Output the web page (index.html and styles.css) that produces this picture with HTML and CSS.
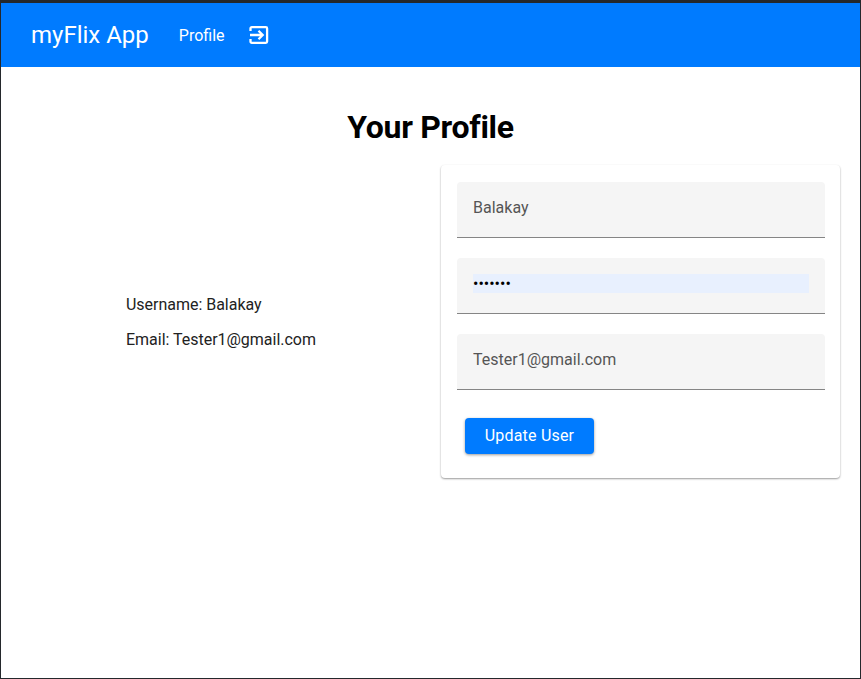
FILE: index.html
```html
<!DOCTYPE html>
<html lang="en">
<head>
    <meta charset="UTF-8">
    <meta name="viewport" content="width=device-width, initial-scale=1.0">
    <title>myFlix App</title>
    <link rel="stylesheet" href="styles.css">
</head>
<body>
    <div class="frame">
        <nav class="navbar">
            <span class="brand">myFlix App</span>
            <a class="nav-link">Profile</a>
            <a class="nav-icon">
                <svg width="20" height="18" viewBox="0 0 20 18" fill="none" stroke="#fff" stroke-width="2.3">
                    <path d="M1.500 5V2.500a1.300 1.300 0 0 1 1.300-1.300h14a1.300 1.300 0 0 1 1.300 1.300v13a1.300 1.300 0 0 1-1.300 1.300h-14a1.300 1.300 0 0 1-1.300-1.300V13"/>
                    <path d="M1 9h12.500M9.500 4.800 13.700 9l-4.200 4.200"/>
                </svg>
            </a>
        </nav>
        <h1 class="page-title">Your Profile</h1>
        <div class="content">
            <div class="user-info">
                <p>Username: Balakay</p>
                <p>Email: Tester1@gmail.com</p>
            </div>
            <div class="card">
                <div class="field"><input type="text" value="Balakay"></div>
                <div class="field"><input class="autofilled" type="password" value="1234567"></div>
                <div class="field"><input type="text" value="Tester1@gmail.com"></div>
                <button class="update-btn">Update User</button>
            </div>
        </div>
    </div>
</body>
</html>
```

FILE: styles.css
```css
* {
    box-sizing: border-box;
}
body {
    margin: 0;
    font-family: Roboto, "Liberation Sans", sans-serif;
    background-color: #fff;
}
.frame {
    width: 861px;
    height: 679px;
    border: 1px solid #24282c;
    border-top-width: 3px;
    overflow: hidden;
}
.navbar {
    display: flex;
    align-items: center;
    height: 64px;
    padding-left: 30px;
    background-color: #007bff;
    color: #fff;
}
.brand {
    font-size: 24px;
    margin-right: 30px;
}
.nav-link {
    font-size: 16px;
    margin-right: 24px;
}
.nav-icon {
    display: flex;
}
.page-title {
    margin: 41px 0 18px;
    height: 39px;
    line-height: 39px;
    font-size: 32px;
    font-weight: 700;
    letter-spacing: -0.3px;
    text-align: center;
    color: #000;
}
.content {
    display: flex;
    align-items: center;
    height: 313px;
}
.user-info {
    width: 440px;
    padding-left: 125px;
    font-size: 16px;
    letter-spacing: -0.02px;
    color: #222;
}
.user-info p {
    margin: 0 0 16px;
    line-height: 19px;
}
.user-info p:last-child {
    margin-bottom: 0;
}
.card {
    width: 399px;
    height: 313px;
    padding: 17px 15px 0 16px;
    border-radius: 4px;
    background-color: #fff;
    box-shadow: 0 1px 2px rgba(0, 0, 0, 0.4);
}
.field {
    height: 56px;
    margin-bottom: 20px;
    padding: 16px;
    border-radius: 4px 4px 0 0;
    border-bottom: 1px solid #858585;
    background-color: #f5f5f5;
}
.field input {
    display: block;
    width: 100%;
    height: 19px;
    padding: 0;
    border: 0;
    outline: 0;
    background: transparent;
    font-family: inherit;
    font-size: 16px;
    color: #555;
}
.field .autofilled {
    background-color: #e8f0fe;
    color: #000;
}
.update-btn {
    display: block;
    width: 129px;
    height: 36px;
    margin: 28px 0 0 8px;
    padding: 0 0 2px;
    border: 0;
    border-radius: 4px;
    background-color: #007bff;
    box-shadow: 0 1px 3px rgba(0, 0, 0, 0.4);
    color: #fff;
    font-family: inherit;
    font-size: 16px;
    letter-spacing: 0.2px;
}
```
